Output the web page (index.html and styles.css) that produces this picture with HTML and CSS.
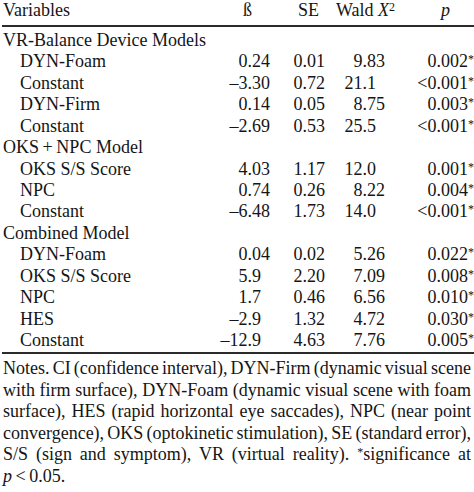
FILE: index.html
```html
<!DOCTYPE html>
<html lang="en">
<head>
<meta charset="utf-8">
<title>Regression models</title>
<link rel="stylesheet" href="styles.css">
</head>
<body>
<table class="results">
  <colgroup>
    <col class="c-var"><col class="c-beta"><col class="c-se"><col class="c-wald"><col class="c-p">
  </colgroup>
  <thead>
    <tr>
      <th class="var">Variables</th>
      <th class="beta">ß</th>
      <th class="se">SE</th>
      <th class="wald">Wald <i>X</i><sup class="sq">2</sup></th>
      <th class="p"><i>p</i></th>
    </tr>
  </thead>
  <tbody>
    <tr><td class="group" colspan="5">VR-Balance Device Models</td></tr>
    <tr><td class="item">DYN-Foam</td><td class="beta">0.24</td><td class="se">0.01</td><td class="wald">9.83</td><td class="p">0.002<span class="ast">*</span></td></tr>
    <tr><td class="item">Constant</td><td class="beta">–3.30</td><td class="se">0.72</td><td class="wald d1">21.1</td><td class="p">&lt;0.001<span class="ast">*</span></td></tr>
    <tr><td class="item">DYN-Firm</td><td class="beta">0.14</td><td class="se">0.05</td><td class="wald">8.75</td><td class="p">0.003<span class="ast">*</span></td></tr>
    <tr><td class="item">Constant</td><td class="beta">–2.69</td><td class="se">0.53</td><td class="wald d1">25.5</td><td class="p">&lt;0.001<span class="ast">*</span></td></tr>
    <tr><td class="group" colspan="5">OKS&#8201;+&#8201;NPC Model</td></tr>
    <tr><td class="item">OKS S/S Score</td><td class="beta">4.03</td><td class="se">1.17</td><td class="wald d1">12.0</td><td class="p">0.001<span class="ast">*</span></td></tr>
    <tr><td class="item">NPC</td><td class="beta">0.74</td><td class="se">0.26</td><td class="wald">8.22</td><td class="p">0.004<span class="ast">*</span></td></tr>
    <tr><td class="item">Constant</td><td class="beta">–6.48</td><td class="se">1.73</td><td class="wald d1">14.0</td><td class="p">&lt;0.001<span class="ast">*</span></td></tr>
    <tr><td class="group" colspan="5">Combined Model</td></tr>
    <tr><td class="item">DYN-Foam</td><td class="beta">0.04</td><td class="se">0.02</td><td class="wald">5.26</td><td class="p">0.022<span class="ast">*</span></td></tr>
    <tr><td class="item">OKS S/S Score</td><td class="beta d1">5.9</td><td class="se">2.20</td><td class="wald">7.09</td><td class="p">0.008<span class="ast">*</span></td></tr>
    <tr><td class="item">NPC</td><td class="beta d1">1.7</td><td class="se">0.46</td><td class="wald">6.56</td><td class="p">0.010<span class="ast">*</span></td></tr>
    <tr><td class="item">HES</td><td class="beta d1">–2.9</td><td class="se">1.32</td><td class="wald">4.72</td><td class="p">0.030<span class="ast">*</span></td></tr>
    <tr><td class="item">Constant</td><td class="beta d1">–12.9</td><td class="se">4.63</td><td class="wald">7.76</td><td class="p">0.005<span class="ast">*</span></td></tr>
  </tbody>
</table>
<p class="notes">
  <span class="ln">Notes. CI (confidence interval), DYN-Firm (dynamic visual scene</span>
  <span class="ln">with firm surface), DYN-Foam (dynamic visual scene with foam</span>
  <span class="ln">surface), HES (rapid horizontal eye saccades), NPC (near point</span>
  <span class="ln">convergence), OKS (optokinetic stimulation), SE (standard error),</span>
  <span class="ln">S/S (sign and symptom), VR (virtual reality). <span class="ast">*</span>significance at</span>
  <span class="ln end"><i>p</i>&#8201;&lt;&#8201;0.05.</span>
</p>
</body>
</html>
```
FILE: styles.css
```css
html, body {
  margin: 0;
  background: #ffffff;
}

body {
  font-family: "Liberation Serif", "Times New Roman", serif;
  font-size: 18px;
  line-height: 21.43px;
  color: #151515;
  overflow: hidden;
}

.results {
  border-collapse: separate;
  border-spacing: 0;
  table-layout: fixed;
  width: 472px;
  margin-left: 2px;
}

.c-var { width: 208px; }
.c-beta { width: 62px; }
.c-se { width: 58px; }
.c-wald { width: 67px; }
.c-p { width: 77px; }

.results th,
.results td {
  padding: 0;
  font-weight: normal;
  white-space: nowrap;
  text-align: right;
}

.results thead th {
  padding-bottom: 3.6px;
  border-bottom: 2px solid #2b2b2b;
}

.results tbody tr:first-child td {
  padding-top: 2.9px;
}

.results tbody tr:last-child td {
  padding-bottom: 1px;
  border-bottom: 2px solid #2b2b2b;
}

.results th.var,
.results td.group {
  text-align: left;
  padding-left: 1px;
}

.results td.item {
  text-align: left;
  padding-left: 18px;
}

.results th.beta { padding-right: 20px; }
.results th.se { padding-right: 11px; }
.results th.wald { padding-right: 2px; }
.results th.p { padding-right: 24px; }

.results td.beta { padding-right: 2px; }
.results td.se { padding-right: 5px; }
.results td.wald { padding-right: 12px; }
.results td.p { padding-right: 0; }

.results td.beta.d1 { padding-right: 11px; }
.results td.wald.d1 { padding-right: 21px; }

.sq {
  font-size: 12px;
  line-height: 0;
  vertical-align: 5px;
}

.ast {
  font-size: 12px;
  line-height: 0;
  vertical-align: 4px;
}

.notes {
  margin: 4px 0 0 3px;
  width: 468px;
  word-spacing: -2px;
}

.notes .ln {
  display: block;
  text-align: justify;
  text-align-last: justify;
}

.notes .ln.end {
  text-align-last: left;
}
```
